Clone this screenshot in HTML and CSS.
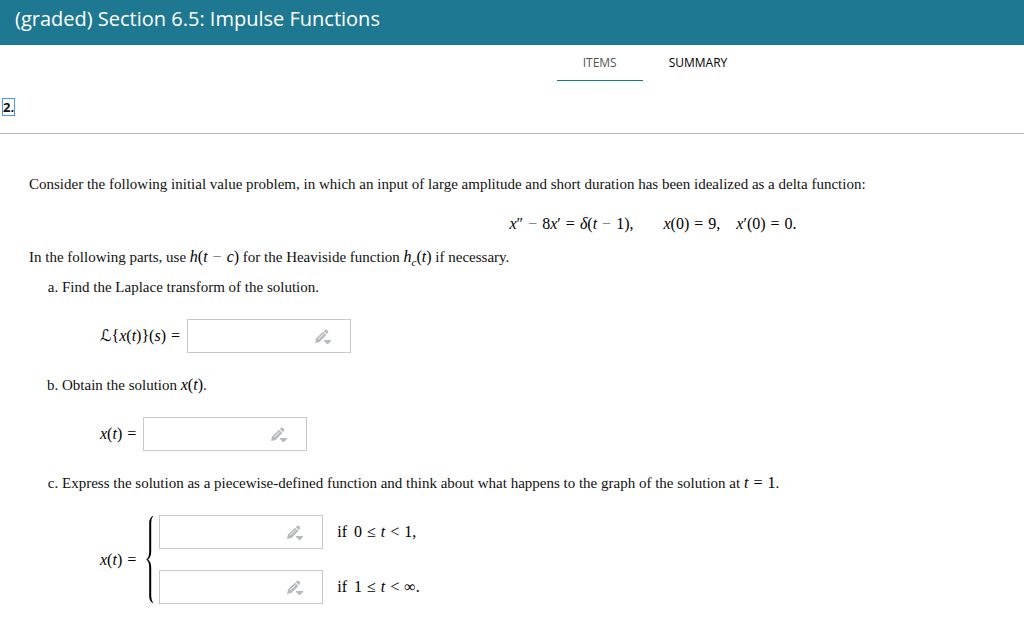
FILE: index.html
```html
<!DOCTYPE html>
<html lang="en">
<head>
  <meta charset="UTF-8">
  <title>(graded) Section 6.5: Impulse Functions</title>
  <meta name="viewport" content="width=device-width, initial-scale=1.0">
  <link rel="stylesheet" href="styles.css">
</head>
<body>
  <svg class="defs" aria-hidden="true">
    <symbol id="pencil" viewBox="0 0 18 16">
      <path d="M1 14 L2 9.500 L9 2.700 L12.300 6 L5.500 13 Z"/>
      <path d="M9.800 2 L11.300 .7 Q12.100 .2 12.900 .9 L14 2 Q14.700 2.800 14 3.600 L13 5.200 Z"/>
      <path class="cut" d="M4 10.200 L9.500 5"/>
      <path d="M10 11 H17 V12 L14 15 H13 L10 12 Z"/>
    </symbol>
  </svg>

  <header class="title-bar">
    <h1>(graded) Section 6.5: Impulse Functions</h1>
  </header>

  <nav class="tabs">
    <a class="tab active" href="#items">ITEMS</a>
    <a class="tab" href="#summary">SUMMARY</a>
  </nav>

  <div class="question-bar">
    <h2 class="number" tabindex="-1">2.</h2>
  </div>

  <main class="question" id="items">
    <p>Consider the following initial value problem, in which an input of large amplitude and short duration has been idealized as a delta function:</p>

    <div class="equation">
      <span class="math"><i>x</i>″<span class="op minus">−</span>8<i>x</i>′<span class="op">=</span><i>δ</i>(<i>t</i><span class="op minus">−</span>1),</span>
      <span class="math"><i>x</i>(0)<span class="op">=</span>9,</span>
      <span class="math"><i>x</i>′(0)<span class="op">=</span>0.</span>
    </div>

    <p>In the following parts, use <span class="math"><i>h</i>(<i>t</i><span class="op minus">−</span><i>c</i>)</span> for the Heaviside function <span class="math"><i>h<sub>c</sub></i>(<i>t</i>)</span> if necessary.</p>

    <ol class="parts">
      <li>
        <p>Find the Laplace transform of the solution.</p>
        <div class="answer">
          <label class="math" for="laplace"><span class="script">ℒ</span>{<i>x</i>(<i>t</i>)}(<i>s</i>)<span class="op">=</span></label>
          <div class="field">
            <input id="laplace" type="text" autocomplete="off">
            <button type="button" aria-label="Equation editor"><svg><use href="#pencil"/></svg></button>
          </div>
        </div>
      </li>
      <li>
        <p>Obtain the solution <span class="math"><i>x</i>(<i>t</i>)</span>.</p>
        <div class="answer">
          <label class="math" for="solution"><i>x</i>(<i>t</i>)<span class="op">=</span></label>
          <div class="field">
            <input id="solution" type="text" autocomplete="off">
            <button type="button" aria-label="Equation editor"><svg><use href="#pencil"/></svg></button>
          </div>
        </div>
      </li>
      <li>
        <p>Express the solution as a piecewise-defined function and think about what happens to the graph of the solution at <span class="math"><i>t</i><span class="op">=</span>1</span>.</p>
        <div class="answer">
          <span class="math"><i>x</i>(<i>t</i>)<span class="op">=</span></span>
          <svg class="brace" viewBox="0 0 8 88" preserveAspectRatio="none" aria-hidden="true">
            <path d="M7.500 .5 Q3.200 2.500 3.200 8 V36 Q3.200 42 .3 44 Q3.200 46 3.200 52 V80 Q3.200 85.500 7.500 87.500 Q5.200 85 5.200 80 V52 Q5.200 46.500 2 44 Q5.200 41.500 5.200 36 V8 Q5.200 3 7.500 .5 Z"/>
          </svg>
          <div class="cases">
            <div class="case">
              <div class="field">
                <input id="case1" type="text" autocomplete="off">
                <button type="button" aria-label="Equation editor"><svg><use href="#pencil"/></svg></button>
              </div>
              <label class="math" for="case1"><span class="if">if</span>0<span class="op">≤</span><i>t</i><span class="op">&lt;</span>1,</label>
            </div>
            <div class="case">
              <div class="field">
                <input id="case2" type="text" autocomplete="off">
                <button type="button" aria-label="Equation editor"><svg><use href="#pencil"/></svg></button>
              </div>
              <label class="math" for="case2"><span class="if">if</span>1<span class="op">≤</span><i>t</i><span class="op">&lt;</span>∞.</label>
            </div>
          </div>
        </div>
      </li>
    </ol>
  </main>
</body>
</html>
```
FILE: styles.css
```css
:root {
  --teal: #1e7891;
  --line: #b8bbc8;
  --box: #c7cacd;
  --icon: #b4bac0;
}

* { box-sizing: border-box; }

body {
  margin: 0;
  background: #fff;
  color: #111;
  font-family: "Open Sans", sans-serif;
}

.defs {
  position: absolute;
  width: 0;
  height: 0;
}

.title-bar {
  background: var(--teal);
  padding: 4px 15px 11px;
}

.title-bar h1 {
  margin: 0;
  color: #fff;
  font-size: 20px;
  font-weight: 400;
  line-height: 30px;
}

.tabs {
  display: flex;
  justify-content: center;
  padding-left: 286px;
}

.tab {
  padding: 9px 26px 8px;
  border-bottom: 1px solid transparent;
  color: #000;
  font-size: 12px;
  line-height: 18px;
  text-decoration: none;
}

.tab.active {
  border-color: var(--teal);
  color: #555;
}

.question-bar {
  display: flex;
  padding: 17px 2px;
  border-bottom: 1px solid var(--line);
}

.number {
  margin: 0;
  border: 1px solid #4d90fe;
  font-size: 13px;
  line-height: 16px;
}

.question {
  padding: 35px 29px 26px;
  font-family: "Liberation Serif", serif;
  font-size: 15px;
  line-height: 30px;
}

.question p {
  margin: 0;
}

.math {
  color: #000;
  font-size: 16px;
  line-height: 16px;
  white-space: nowrap;
}

.op {
  margin: 0 5px;
}

.minus {
  color: #777;
}

.math sub {
  font-size: 11px;
  line-height: 0;
}

.script {
  font-family: "DejaVu Sans", sans-serif;
}

.equation {
  display: flex;
  justify-content: center;
  gap: 16px;
  padding: 17px 0 10px 282px;
}

.equation .math:first-child {
  margin-right: 14px;
}

.parts {
  margin: 0;
  padding-left: 33px;
  list-style: lower-alpha;
}

.answer {
  display: flex;
  align-items: center;
  gap: 2px;
  padding: 17px 0 17px 38px;
}

.field {
  display: flex;
  width: 164px;
  height: 34px;
  border: 1px solid var(--box);
}

.field input {
  flex: 1;
  min-width: 0;
  padding: 0 8px;
  border: none;
  outline: none;
  background: none;
  font: inherit;
}

.field button {
  display: flex;
  align-items: center;
  padding: 2px 18px 0 0;
  border: none;
  background: none;
  cursor: pointer;
}

.field svg {
  width: 18px;
  height: 16px;
  fill: var(--icon);
}

.cut {
  fill: none;
  stroke: #fff;
  stroke-width: 1;
}

.brace {
  align-self: stretch;
  width: 8px;
  margin: 0 3px;
  fill: #000;
}

.cases {
  display: flex;
  flex-direction: column;
  gap: 21px;
}

.case {
  display: flex;
  align-items: center;
  gap: 14px;
}

.if {
  margin-right: 7px;
}
```
